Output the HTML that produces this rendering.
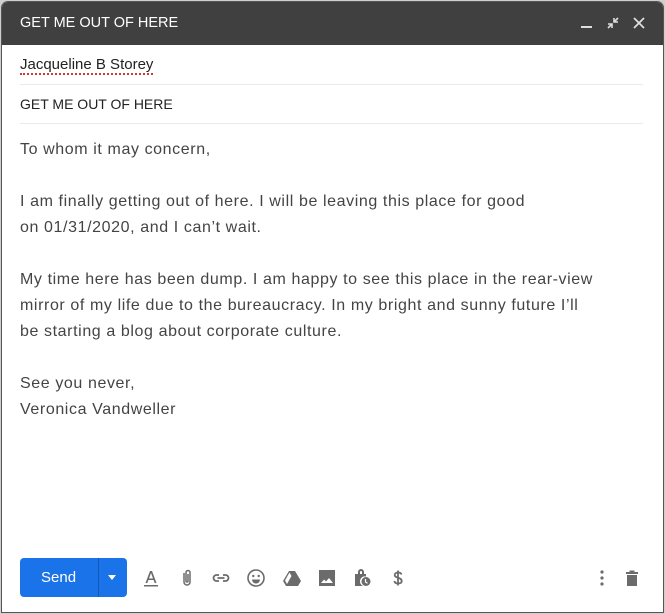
<!DOCTYPE html>
<html><head><style>
body{margin:0;width:665px;height:614px;background:#cfcfcf;position:relative;overflow:hidden;font-family:"Liberation Sans",Arial,sans-serif}
.win{position:absolute;left:2px;top:2px;width:661px;height:610px;background:#fff;border-radius:6px 6px 0 0;overflow:hidden;box-shadow:0 0 0 1px #555}
.hd{height:43px;background:#404040;color:#fff;font-size:14.5px;line-height:43px;padding-left:18px;position:relative}
.ic{position:absolute;top:0;color:#e0e0e0}
.row{position:absolute;left:18px;right:20px;border-bottom:1px solid #e8eaed;font-size:14px;color:#222}
.body{position:absolute;left:18px;top:135px;font-size:16px;line-height:26px;color:#444;letter-spacing:.6px;white-space:nowrap}
.send{position:absolute;left:18px;top:556px;width:107px;height:39px;background:#1a73e8;border-radius:4px;color:#fff;font-size:15px}
.tb svg{position:absolute;top:566px;width:20px;height:20px;fill:#6b6b6b}
</style></head><body>
<div class="win">
<div class="hd">GET ME OUT OF HERE
<div class="ic" style="left:579px;top:24px;width:11px;height:2px;background:#ddd"></div>
<svg class="ic" style="left:605px;top:15px" width="12" height="12" viewBox="0 0 12 12"><path d="M1 7h4v4M5 7L1 11M11 5H7V1M7 5l4-4" stroke="#ddd" stroke-width="1.6" fill="none"/></svg>
<svg class="ic" style="left:631px;top:15px" width="12" height="12" viewBox="0 0 12 12"><path d="M1 1l10 10M11 1L1 11" stroke="#ddd" stroke-width="1.8"/></svg>
</div>
<div class="row" style="top:43px;height:39px;line-height:40px;font-size:15px"><span style="border-bottom:2px dotted #d33;line-height:16px;display:inline-block">Jacqueline B Storey</span></div>
<div class="row" style="top:83px;height:38px;line-height:38px">GET ME OUT OF HERE</div>
<div class="body">To whom it may concern,<br><br>I am finally getting out of here. I will be leaving this place for good<br>on 01/31/2020, and I can’t wait.<br><br>My time here has been dump. I am happy to see this place in the rear-view<br>mirror of my life due to the bureaucracy. In my bright and sunny future I’ll<br>be starting a blog about corporate culture.<br><br>See you never,<br>Veronica Vandweller</div>
<div class="send"><span style="position:absolute;left:21px;top:11px">Send</span><div style="position:absolute;left:78px;top:0;width:1px;height:39px;background:#1558b0"></div><div style="position:absolute;left:88px;top:17px;border:4px solid transparent;border-top:5px solid #fff"></div></div>
<div class="tb">
<svg style="left:139px" viewBox="0 0 20 20"><path d="M3 17h14v1.5H3z"/><path d="M9 3h2l4.5 12h-1.8l-1.1-3H7.4l-1.1 3H4.5zM8 10.5h4L10 5z"/></svg>
<svg style="left:175px" viewBox="0 0 20 20"><path d="M7 5v9a3 3 0 006 0V4.5a2 2 0 00-4 0V13a1 1 0 002 0V6" stroke="#6b6b6b" stroke-width="1.5" fill="none"/></svg>
<svg style="left:209px" viewBox="0 0 20 20"><path d="M8 7H5.5a3 3 0 000 6H8M12 7h2.5a3 3 0 010 6H12M6.5 10h7" stroke="#6b6b6b" stroke-width="1.8" fill="none"/></svg>
<svg style="left:244px" viewBox="0 0 20 20"><circle cx="10" cy="10" r="8" stroke="#6b6b6b" stroke-width="1.6" fill="none"/><circle cx="7.3" cy="8" r="1.2"/><circle cx="12.7" cy="8" r="1.2"/><path d="M6 11.5h8a4 4 0 01-8 0z"/></svg>
<svg style="left:280px" viewBox="0 0 20 20"><path d="M7 3h6l6 10-3 5H4l-3-5zM7.5 4.5L3 12.5l2 3.5 4.5-8z"/></svg>
<svg style="left:315px" viewBox="0 0 20 20"><path d="M2 2h16v16H2zM4 15h12l-4-5-3 3.5-2-2z"/></svg>
<svg style="left:350px" viewBox="0 0 20 20"><path d="M6 4a3 3 0 016 0v2h2v2.5a5 5 0 00-3 9.5H3V6h3zM8 6h2V4a1 1 0 00-2 0z"/><circle cx="14" cy="13.5" r="4.5"/><path d="M13.5 11v3l2 1.3" stroke="#fff" stroke-width="1.2" fill="none"/></svg>
<svg style="left:386px" viewBox="0 0 20 20"><path d="M13.5 6.5C13 5 11.8 4.5 10 4.5s-3.3 1-3.3 2.5c0 3.5 7 2 7 6 0 1.7-1.6 2.5-3.7 2.5-2 0-3.3-.8-3.7-2.5M10 2.5v15" stroke="#6b6b6b" stroke-width="1.8" fill="none"/></svg>
<svg style="left:590px" viewBox="0 0 20 20"><circle cx="10" cy="4" r="1.6"/><circle cx="10" cy="10" r="1.6"/><circle cx="10" cy="16" r="1.6"/></svg>
<svg style="left:620px" viewBox="0 0 20 20"><path d="M4 4h12v2H4zM7.5 2.5h5V4h-5zM5 7h10v11H5z"/></svg>
</div>
</div>
</body></html>
